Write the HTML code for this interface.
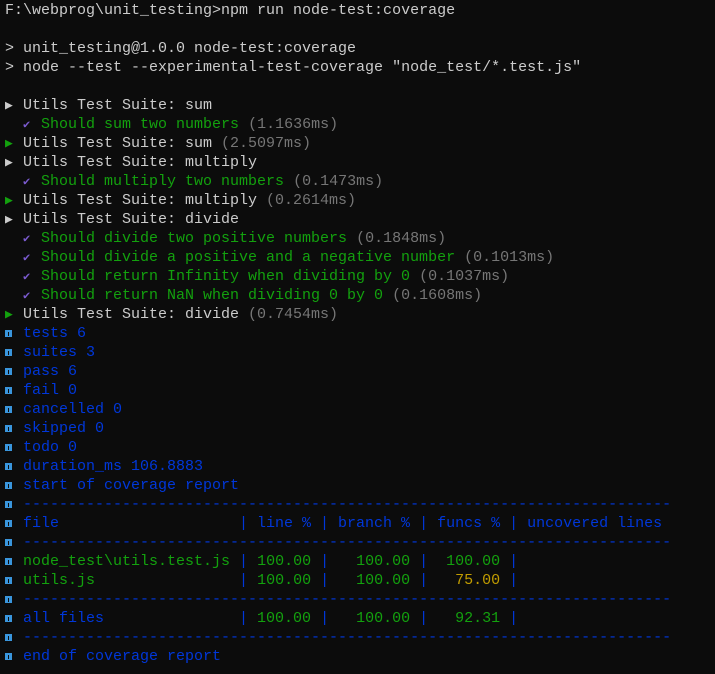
<!DOCTYPE html>
<html><head><meta charset="utf-8"><style>
html,body{margin:0;padding:0;background:#0c0c0c;width:715px;height:674px;overflow:hidden}
.t{position:absolute;left:5px;top:1px;font-family:"Liberation Mono","DejaVu Sans Mono",monospace;font-size:15px;color:#cccccc}
.t div{height:19px;line-height:19px;white-space:pre}
.g{color:#13a10e}.d{color:#767676}.b{color:#0037da}.y{color:#c19c00}
.k{display:inline-block;width:18px;text-align:left}
.p{color:#7b5bd0;font-size:12px}
.tw{color:#cccccc;font-size:13px}.tg{color:#13a10e;font-size:13px}
.i{display:inline-block;width:18px;height:19px;position:relative;vertical-align:top}
.i:before{content:"";position:absolute;left:0;top:6px;width:7px;height:7px;background:#3a96dd}
.i:after{content:"";position:absolute;left:3px;top:8px;width:1px;height:4px;background:#0c0c0c}
.dash{display:inline-block;width:647px;overflow:hidden;vertical-align:top;height:19px}
</style></head><body><div class="t"><div>F:\webprog\unit_testing&gt;npm run node-test:coverage</div><div> </div><div>&gt; unit_testing@1.0.0 node-test:coverage</div><div>&gt; node --test --experimental-test-coverage "node_test/*.test.js"</div><div> </div><div><span class="k tw">▶</span>Utils Test Suite: sum</div><div><span class="k"></span><span class="k p">✔</span><span class="g">Should sum two numbers</span> <span class="d">(1.1636ms)</span></div><div><span class="k tg">▶</span>Utils Test Suite: sum <span class="d">(2.5097ms)</span></div><div><span class="k tw">▶</span>Utils Test Suite: multiply</div><div><span class="k"></span><span class="k p">✔</span><span class="g">Should multiply two numbers</span> <span class="d">(0.1473ms)</span></div><div><span class="k tg">▶</span>Utils Test Suite: multiply <span class="d">(0.2614ms)</span></div><div><span class="k tw">▶</span>Utils Test Suite: divide</div><div><span class="k"></span><span class="k p">✔</span><span class="g">Should divide two positive numbers</span> <span class="d">(0.1848ms)</span></div><div><span class="k"></span><span class="k p">✔</span><span class="g">Should divide a positive and a negative number</span> <span class="d">(0.1013ms)</span></div><div><span class="k"></span><span class="k p">✔</span><span class="g">Should return Infinity when dividing by 0</span> <span class="d">(0.1037ms)</span></div><div><span class="k"></span><span class="k p">✔</span><span class="g">Should return NaN when dividing 0 by 0</span> <span class="d">(0.1608ms)</span></div><div><span class="k tg">▶</span>Utils Test Suite: divide <span class="d">(0.7454ms)</span></div><div><span class="i"></span><span class="b">tests 6</span></div><div><span class="i"></span><span class="b">suites 3</span></div><div><span class="i"></span><span class="b">pass 6</span></div><div><span class="i"></span><span class="b">fail 0</span></div><div><span class="i"></span><span class="b">cancelled 0</span></div><div><span class="i"></span><span class="b">skipped 0</span></div><div><span class="i"></span><span class="b">todo 0</span></div><div><span class="i"></span><span class="b">duration_ms 106.8883</span></div><div><span class="i"></span><span class="b">start of coverage report</span></div><div><span class="i"></span><span class="b dash">--------------------------------------------------------------------------------------------</span></div><div><span class="i"></span><span class="b">file                    | line % | branch % | funcs % | uncovered lines</span></div><div><span class="i"></span><span class="b dash">--------------------------------------------------------------------------------------------</span></div><div><span class="i"></span><span class="g">node_test\utils.test.js</span><span class="b"> | </span><span class="g">100.00</span><span class="b"> | </span><span class="g">  100.00</span><span class="b"> | </span><span class="g"> 100.00</span><span class="b"> | </span></div><div><span class="i"></span><span class="g">utils.js               </span><span class="b"> | </span><span class="g">100.00</span><span class="b"> | </span><span class="g">  100.00</span><span class="b"> | </span><span class="y">  75.00</span><span class="b"> | </span></div><div><span class="i"></span><span class="b dash">--------------------------------------------------------------------------------------------</span></div><div><span class="i"></span><span class="b">all files               | </span><span class="g">100.00</span><span class="b"> | </span><span class="g">  100.00</span><span class="b"> | </span><span class="g">  92.31</span><span class="b"> |</span></div><div><span class="i"></span><span class="b dash">--------------------------------------------------------------------------------------------</span></div><div><span class="i"></span><span class="b">end of coverage report</span></div></div></body></html>
